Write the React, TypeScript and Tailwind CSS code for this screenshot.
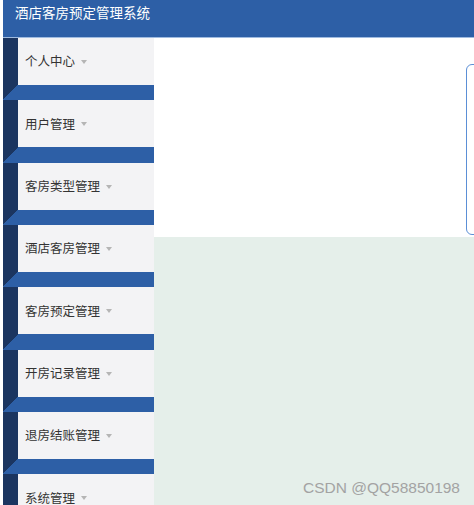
const menus = [
  "个人中心",
  "用户管理",
  "客房类型管理",
  "酒店客房管理",
  "客房预定管理",
  "开房记录管理",
  "退房结账管理",
  "系统管理",
];

const cjk = { fontFamily: '"Noto Sans CJK SC", "Noto Sans", sans-serif' };

function MenuItem({ label }: { label: string }) {
  return (
    <div className="shrink-0">
      <div className="flex h-[47px]">
        <div className="w-[15px] shrink-0 bg-[#1b3560]" />
        <div className="flex flex-1 items-center gap-[6px] bg-[#f3f3f5] pl-[7px]">
          <span className="text-[12.5px] leading-none text-[#333]">{label}</span>
          <span className="mt-[1px] inline-block h-0 w-0 border-x-[3px] border-t-[4px] border-x-transparent border-t-[#b5b5b5]" />
        </div>
      </div>
      <div className="flex h-[15.33px]">
        <div className="w-[15px] shrink-0 bg-[linear-gradient(to_bottom_right,#1b3560_50%,#2d5fa6_50%)]" />
        <div className="flex-1 bg-[#2d5fa6]" />
      </div>
    </div>
  );
}

export default function App() {
  return (
    <div className="h-[505px] w-[474px] overflow-hidden bg-white pl-[3px]" style={cjk}>
      {/* Header */}
      <div className="h-[38px] border-b border-[#9fbbe0] bg-[#2d5fa6] pl-[12px] pt-[2px]">
        <h1 className="text-[13.5px] leading-[20px] font-normal text-white">酒店客房预定管理系统</h1>
      </div>

      <div className="flex h-[467px]">
        {/* Sidebar */}
        <aside className="flex w-[151px] shrink-0 flex-col overflow-hidden">
          {menus.map((m) => (
            <MenuItem key={m} label={m} />
          ))}
        </aside>

        {/* Main */}
        <main className="flex flex-1 flex-col overflow-hidden">
          <div className="h-[199px] shrink-0 bg-white pl-[312px] pt-[26px]">
            <div className="h-[171px] w-[40px] rounded-[6px] border-[1.5px] border-[#5b8fd6]" />
          </div>
          <div className="flex flex-1 flex-col items-end justify-end bg-[#e5efea] pb-[8px] pr-[14px]">
            <span
              className="text-[15.5px] leading-[18px] text-[#a3a3a3]"
              style={{ fontFamily: '"Liberation Sans", Arial, sans-serif' }}
            >
              CSDN @QQ58850198
            </span>
          </div>
        </main>
      </div>
    </div>
  );
}
